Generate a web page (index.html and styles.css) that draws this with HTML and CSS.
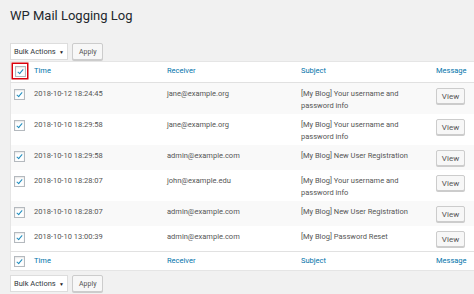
FILE: index.html
```html
<!DOCTYPE html>
<html lang="en">
<head>
    <meta charset="UTF-8">
    <title>WP Mail Logging Log</title>
    <link rel="stylesheet" href="styles.css">
</head>
<body>
    <div class="wrap">
        <h1 class="page-title">WP Mail Logging Log</h1>

        <div class="tablenav top">
            <div class="bulk-select"><span>Bulk Actions</span><span class="caret">&#9660;</span></div>
            <button class="button">Apply</button>
        </div>

        <table class="log-table">
            <thead>
                <tr>
                    <th class="col-check"><span class="highlight"><span class="cb checked"></span></span></th>
                    <th class="col-time"><a href="#">Time</a></th>
                    <th class="col-receiver"><a href="#">Receiver</a></th>
                    <th class="col-subject"><a href="#">Subject</a></th>
                    <th class="col-message"><a href="#">Message</a></th>
                </tr>
            </thead>
            <tbody>
                <tr class="alt">
                    <td class="col-check"><span class="cb checked"></span></td>
                    <td>2018-10-12 18:24:45</td>
                    <td>jane@example.org</td>
                    <td>[My Blog] Your username and<br>password info</td>
                    <td><button class="button view">View</button></td>
                </tr>
                <tr>
                    <td class="col-check"><span class="cb checked"></span></td>
                    <td>2018-10-10 18:29:58</td>
                    <td>jane@example.org</td>
                    <td>[My Blog] Your username and<br>password info</td>
                    <td><button class="button view">View</button></td>
                </tr>
                <tr class="alt">
                    <td class="col-check"><span class="cb checked"></span></td>
                    <td>2018-10-10 18:29:58</td>
                    <td>admin@example.com</td>
                    <td>[My Blog] New User Registration</td>
                    <td><button class="button view">View</button></td>
                </tr>
                <tr>
                    <td class="col-check"><span class="cb checked"></span></td>
                    <td>2018-10-10 18:28:07</td>
                    <td>john@example.edu</td>
                    <td>[My Blog] Your username and<br>password info</td>
                    <td><button class="button view">View</button></td>
                </tr>
                <tr class="alt">
                    <td class="col-check"><span class="cb checked"></span></td>
                    <td>2018-10-10 18:28:07</td>
                    <td>admin@example.com</td>
                    <td>[My Blog] New User Registration</td>
                    <td><button class="button view">View</button></td>
                </tr>
                <tr>
                    <td class="col-check"><span class="cb checked"></span></td>
                    <td>2018-10-10 13:00:39</td>
                    <td>admin@example.com</td>
                    <td>[My Blog] Password Reset</td>
                    <td><button class="button view">View</button></td>
                </tr>
            </tbody>
            <tfoot>
                <tr>
                    <th class="col-check"><span class="cb checked"></span></th>
                    <th><a href="#">Time</a></th>
                    <th><a href="#">Receiver</a></th>
                    <th><a href="#">Subject</a></th>
                    <th><a href="#">Message</a></th>
                </tr>
            </tfoot>
        </table>

        <div class="tablenav bottom">
            <div class="bulk-select"><span>Bulk Actions</span><span class="caret">&#9660;</span></div>
            <button class="button">Apply</button>
        </div>
    </div>
</body>
</html>
```

FILE: styles.css
```css
html, body {
    margin: 0;
    padding: 0;
    background-color: #f1f1f1;
    overflow: hidden;
}
body {
    font-family: Roboto, "Liberation Sans", sans-serif;
    font-size: 8px;
    color: #555;
}
.wrap {
    padding-left: 10px;
}
.page-title {
    margin: 0 0 19px;
    padding-top: 8px;
    font-size: 13px;
    line-height: 16px;
    font-weight: 400;
    color: #23282d;
}
.tablenav {
    display: flex;
    align-items: center;
    gap: 4px;
    height: 17px;
    margin-bottom: 1px;
}
.tablenav.bottom {
    margin-top: 4px;
}
.bulk-select {
    box-sizing: border-box;
    display: flex;
    align-items: center;
    justify-content: space-between;
    width: 58px;
    height: 17px;
    padding: 0 3px;
    background-color: #fff;
    border: 1px solid #ddd;
    color: #32373c;
    font-size: 7.5px;
    white-space: nowrap;
}
.caret {
    font-size: 5px;
    color: #222;
}
.button {
    box-sizing: border-box;
    height: 17px;
    padding: 0 6px;
    font-family: inherit;
    font-size: 7px;
    color: #555;
    background-color: #f7f7f7;
    border: 1px solid #ccc;
    border-radius: 2px;
    box-shadow: 0 1px 0 #ccc;
}
.log-table {
    width: 100%;
    border-collapse: collapse;
    table-layout: fixed;
    background-color: #fff;
    border: 1px solid #e5e5e5;
    border-right: 0;
    font-size: 7.5px;
}
.log-table th,
.log-table td {
    text-align: left;
    vertical-align: top;
    font-weight: 400;
    line-height: 12px;
    padding: 5px 5px 2px;
}
.log-table thead th {
    padding: 3px 5px;
    border-bottom: 1px solid #e1e1e1;
}
.log-table tfoot th {
    padding: 3px 5px;
    border-top: 1px solid #e1e1e1;
}
.log-table a {
    color: #0073aa;
    text-decoration: none;
}
.log-table .col-check {
    width: 9px;
    padding-left: 3px;
    padding-right: 6px;
}
.log-table .col-time { width: 123px; }
.log-table .col-receiver { width: 124px; }
.log-table .col-subject { width: 125px; }
.log-table tr.alt td {
    background-color: #f9f9f9;
}
.cb {
    position: relative;
    display: block;
    box-sizing: border-box;
    width: 11px;
    height: 11px;
    margin-top: 1px;
    background-color: #fff;
    border: 1px solid #b4b9be;
    box-shadow: inset 0 1px 2px rgba(0, 0, 0, 0.1);
}
.cb.checked::after {
    content: "";
    position: absolute;
    left: 3px;
    top: 0.5px;
    width: 2px;
    height: 5px;
    border-right: 1.8px solid #1e8cbe;
    border-bottom: 1.8px solid #1e8cbe;
    transform: rotate(40deg);
}
.highlight {
    display: block;
    box-sizing: border-box;
    width: 16px;
    height: 16px;
    margin: -2px 0 0 -2px;
    padding: 1px;
    border: 1px solid #d9000b;
    box-shadow: 0 0 0 0.5px #d9000b;
}
.highlight .cb {
    margin: 1px 0 0 1px;
}
.button.view {
    display: block;
    width: 29px;
    height: 16px;
    margin-bottom: 2px;
    padding: 0;
    font-size: 8px;
}
```
